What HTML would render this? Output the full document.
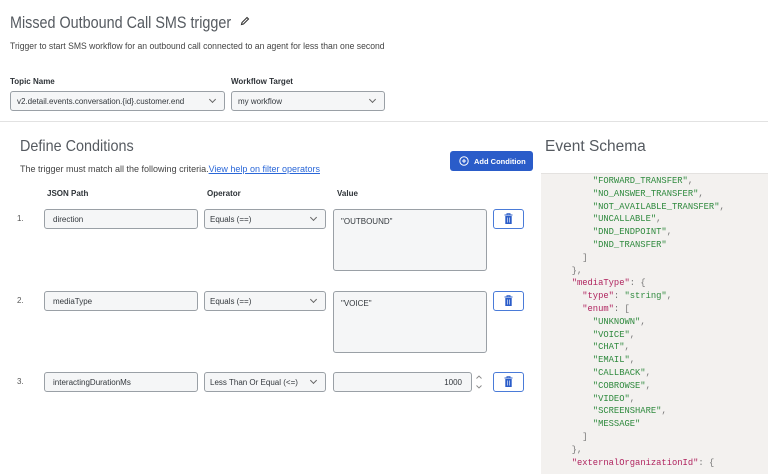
<!DOCTYPE html>
<html><head><style>
*{box-sizing:border-box;margin:0;padding:0}
body{width:768px;height:474px;overflow:hidden;background:#fff;font-family:"Liberation Sans",sans-serif;color:#33383d;position:relative}
.a{position:absolute}
.lbl{font-size:8px;font-weight:bold;color:#2e3338}
.box{position:absolute;border:1px solid #9aa0a6;border-radius:3px;background:#f5f6f7;font-size:8px;color:#33383d;padding-left:8px;display:flex;align-items:center;white-space:nowrap}
.chev{position:absolute;right:9px;top:5px;width:5px;height:5px;border-right:1px solid #666;border-bottom:1px solid #666;transform:rotate(45deg)}
.ta{align-items:flex-start;padding-top:7px}
.del{position:absolute;width:31px;height:20px;border:1px solid #4a7bd8;border-radius:3px;background:#fff}
.num{position:absolute;font-size:8px;color:#555}
pre{font-family:"Liberation Mono",monospace;font-size:8.8px;line-height:12.8px;color:#777}
.s{color:#2f8a3e}.k{color:#b0245f}
</style></head><body>
<div class="a" style="left:10px;top:13px;font-size:17px;color:#555a60;white-space:nowrap;transform:scaleX(0.845);transform-origin:0 0">Missed Outbound Call SMS trigger</div>
<svg class="a" style="left:240px;top:16px" width="10" height="10" viewBox="0 0 10 10"><path d="M1.5 8.5 L2 6.5 L7 1.5 L8.5 3 L3.5 8 Z" fill="none" stroke="#333" stroke-width="1.1"/></svg>
<div class="a" style="left:10px;top:41px;font-size:9px;color:#444;white-space:nowrap;transform:scaleX(0.957);transform-origin:0 0">Trigger to start SMS workflow for an outbound call connected to an agent for less than one second</div>
<div class="a lbl" style="left:10px;top:77px">Topic Name</div>
<div class="a lbl" style="left:231px;top:77px">Workflow Target</div>
<div class="box" style="left:10px;top:91px;width:215px;height:20px;padding-left:6px">v2.detail.events.conversation.{id}.customer.end<span class="chev"></span></div>
<div class="box" style="left:231px;top:91px;width:154px;height:20px;padding-left:6px">my workflow<span class="chev"></span></div>
<div class="a" style="left:0;top:121px;width:768px;height:1px;background:#e2e2e2"></div>
<div class="a" style="left:20px;top:138px;font-size:16px;color:#555a60;white-space:nowrap;transform:scaleX(0.9);transform-origin:0 0">Define Conditions</div>
<div class="a" style="left:20px;top:164px;font-size:9px;color:#444;white-space:nowrap">The trigger must match all the following criteria.<span style="color:#2a67d8;text-decoration:underline">View help on filter operators</span></div>
<div class="a" style="left:450px;top:151px;width:83px;height:20px;background:#2a5cc9;border-radius:3px;color:#fff;font-size:7.5px;font-weight:bold;display:flex;align-items:center;padding-left:9px;white-space:nowrap"><svg width="10" height="10" viewBox="0 0 10 10" style="margin-right:5px;flex:none"><circle cx="5" cy="5" r="4.2" fill="none" stroke="#fff" stroke-width="1"/><path d="M5 3V7M3 5H7" stroke="#fff" stroke-width="1"/></svg>Add Condition</div>
<div class="a" style="left:545px;top:138px;font-size:15.5px;color:#555a60;white-space:nowrap">Event Schema</div>
<div class="a lbl" style="left:47px;top:189px">JSON Path</div>
<div class="a lbl" style="left:207px;top:189px">Operator</div>
<div class="a lbl" style="left:337px;top:189px">Value</div>

<div class="num" style="left:17px;top:214px">1.</div>
<div class="box" style="left:44px;top:209px;width:154px;height:20px">direction</div>
<div class="box" style="left:204px;top:209px;width:122px;height:20px;padding-left:5px">Equals (==)<span class="chev"></span></div>
<div class="box ta" style="left:333px;top:209px;width:154px;height:62px;padding-left:7px">"OUTBOUND"</div>
<div class="del" style="left:493px;top:209px"></div>

<div class="num" style="left:17px;top:296px">2.</div>
<div class="box" style="left:44px;top:291px;width:154px;height:20px">mediaType</div>
<div class="box" style="left:204px;top:291px;width:122px;height:20px;padding-left:5px">Equals (==)<span class="chev"></span></div>
<div class="box ta" style="left:333px;top:291px;width:154px;height:62px;padding-left:7px">"VOICE"</div>
<div class="del" style="left:493px;top:291px"></div>

<div class="num" style="left:17px;top:377px">3.</div>
<div class="box" style="left:44px;top:372px;width:154px;height:20px">interactingDurationMs</div>
<div class="box" style="left:204px;top:372px;width:122px;height:20px;padding-left:5px">Less Than Or Equal (&lt;=)<span class="chev"></span></div>
<div class="box" style="left:333px;top:372px;width:139px;height:20px;justify-content:flex-end;padding-right:9px">1000</div>
<svg class="a" style="left:475px;top:374px" width="8" height="16" viewBox="0 0 8 16"><path d="M1.5 4.5L4 2L6.5 4.5M1.5 11.5L4 14L6.5 11.5" fill="none" stroke="#888" stroke-width="0.9"/></svg>
<div class="del" style="left:493px;top:372px"></div>

<svg class="a" style="left:504px;top:213px" width="9" height="12" viewBox="0 0 9 12"><path d="M0.5 2H8.5M3 2V0.8H6V2" stroke="#2a5cc9" stroke-width="1" fill="none"/><rect x="1.3" y="3" width="6.4" height="8" fill="#2a5cc9"/><path d="M3.5 4.5V9.5M5.5 4.5V9.5" stroke="#fff" stroke-width="0.6"/></svg>
<svg class="a" style="left:504px;top:295px" width="9" height="12" viewBox="0 0 9 12"><path d="M0.5 2H8.5M3 2V0.8H6V2" stroke="#2a5cc9" stroke-width="1" fill="none"/><rect x="1.3" y="3" width="6.4" height="8" fill="#2a5cc9"/><path d="M3.5 4.5V9.5M5.5 4.5V9.5" stroke="#fff" stroke-width="0.6"/></svg>
<svg class="a" style="left:504px;top:376px" width="9" height="12" viewBox="0 0 9 12"><path d="M0.5 2H8.5M3 2V0.8H6V2" stroke="#2a5cc9" stroke-width="1" fill="none"/><rect x="1.3" y="3" width="6.4" height="8" fill="#2a5cc9"/><path d="M3.5 4.5V9.5M5.5 4.5V9.5" stroke="#fff" stroke-width="0.6"/></svg>

<div class="a" style="left:541px;top:173px;width:227px;height:301px;background:#f3f1ef;border-top:1px solid #e4e2e0;overflow:hidden">
<pre style="position:absolute;left:-1px;top:1px">
          <span class="s">"FORWARD_TRANSFER"</span>,
          <span class="s">"NO_ANSWER_TRANSFER"</span>,
          <span class="s">"NOT_AVAILABLE_TRANSFER"</span>,
          <span class="s">"UNCALLABLE"</span>,
          <span class="s">"DND_ENDPOINT"</span>,
          <span class="s">"DND_TRANSFER"</span>
        ]
      },
      <span class="k">"mediaType"</span>: {
        <span class="k">"type"</span>: <span class="s">"string"</span>,
        <span class="k">"enum"</span>: [
          <span class="s">"UNKNOWN"</span>,
          <span class="s">"VOICE"</span>,
          <span class="s">"CHAT"</span>,
          <span class="s">"EMAIL"</span>,
          <span class="s">"CALLBACK"</span>,
          <span class="s">"COBROWSE"</span>,
          <span class="s">"VIDEO"</span>,
          <span class="s">"SCREENSHARE"</span>,
          <span class="s">"MESSAGE"</span>
        ]
      },
      <span class="k">"externalOrganizationId"</span>: {
</pre>
</div>
</body></html>
